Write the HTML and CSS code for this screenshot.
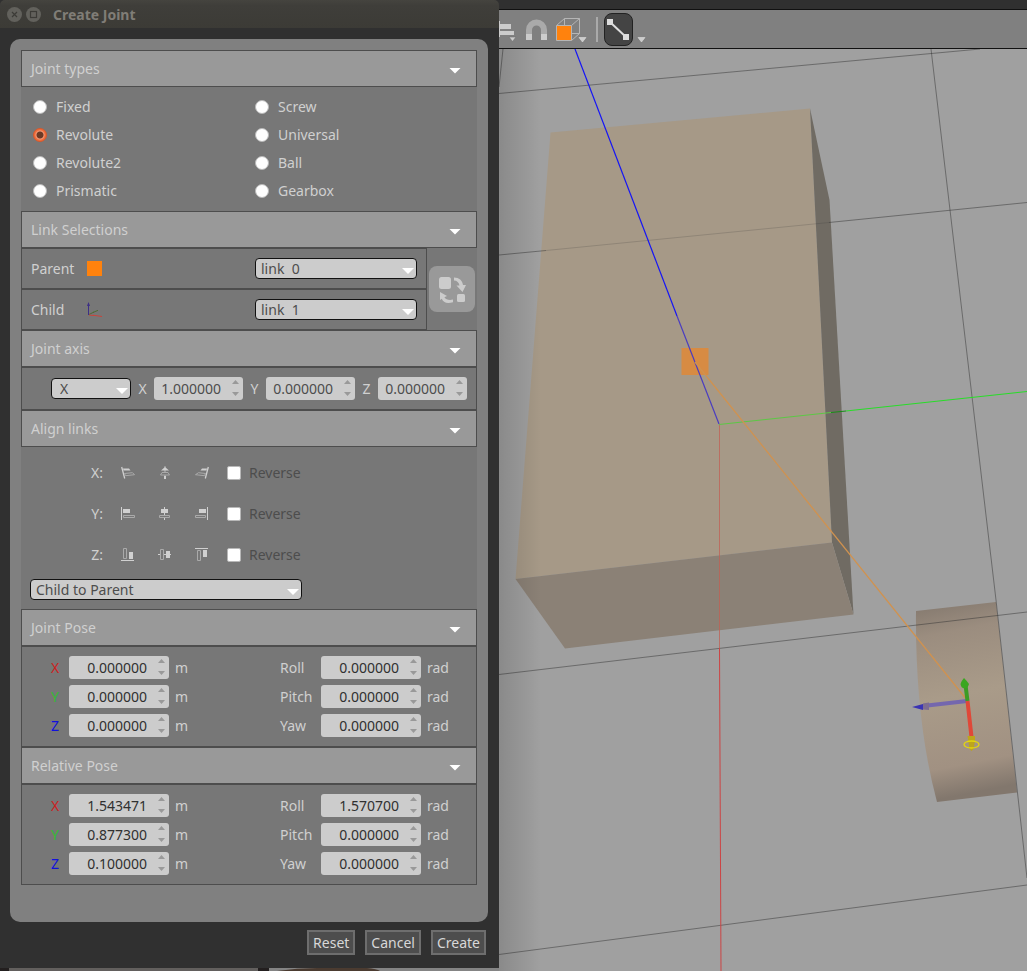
FILE: index.html
```html
<!DOCTYPE html>
<html lang="en">
  <head>
    <meta charset="UTF-8" />
    <meta name="viewport" content="width=device-width, initial-scale=1.0" />
    <title>Create Joint</title>
    <link rel="stylesheet" href="styles.css">
  </head>
  <body>
    <div class="side">
      <div class="dialog">
        <div class="titlebar">
          <button class="winButton" aria-label="Close">
            <svg width="15" height="15" viewBox="0 0 15 15"><path d="M5 5l5 5M10 5l-5 5" stroke="#3c3b37" stroke-width="1.2" /></svg>
          </button>
          <button class="winButton" aria-label="Maximize">
            <svg width="15" height="15" viewBox="0 0 15 15"><rect x="4.5" y="4.5" width="6" height="6" fill="none" stroke="#3c3b37" stroke-width="1.2" /></svg>
          </button>
          <strong class="title">Create Joint</strong>
        </div>

        <form class="panel" id="jointForm">
          <button type="button" class="header">Joint types</button>
          <div class="types">
            <label class="option"><input type="radio" name="type" class="radio" />Fixed</label>
            <label class="option"><input type="radio" name="type" class="radio" />Screw</label>
            <label class="option"><input type="radio" name="type" class="radio" checked />Revolute</label>
            <label class="option"><input type="radio" name="type" class="radio" />Universal</label>
            <label class="option"><input type="radio" name="type" class="radio" />Revolute2</label>
            <label class="option"><input type="radio" name="type" class="radio" />Ball</label>
            <label class="option"><input type="radio" name="type" class="radio" />Prismatic</label>
            <label class="option"><input type="radio" name="type" class="radio" />Gearbox</label>
          </div>

          <button type="button" class="header">Link Selections</button>
          <div class="links">
            <div class="linkRows">
              <div class="linkRow">
                <label for="parentLink" class="linkLabel">Parent</label>
                <svg class="linkIcon" width="16" height="16" viewBox="0 0 16 16"><rect x="0" y="0" width="15" height="15" fill="#ff820d" /></svg>
                <span class="combo">
                  <select class="select" id="parentLink"><option>link&nbsp; 0</option></select>
                </span>
              </div>
              <div class="linkRow">
                <label for="childLink" class="linkLabel">Child</label>
                <svg class="linkIcon" width="16" height="16" viewBox="0 0 16 16" fill="none">
                  <path d="M1.500 13V3" stroke="#3d2f86" />
                  <path d="M1.500 0L3 4H0z" fill="#3d2f86" />
                  <path d="M2 12.500l5-2.500M6 10.500l5-2.200" stroke="#4e6b33" />
                  <path d="M2 13l5 .6M6 13.200l9 1.300" stroke="#c8443a" />
                </svg>
                <span class="combo">
                  <select class="select" id="childLink"><option>link&nbsp; 1</option></select>
                </span>
              </div>
            </div>
            <div class="swapCell">
              <button type="button" class="swap" aria-label="Swap links">
                <svg width="28" height="28" viewBox="0 0 28 28" fill="#ccc">
                  <rect x="1" y="2" width="12" height="12" rx="2.500" />
                  <rect x="19" y="19" width="8" height="8" rx="1.500" />
                  <path d="M16 2.500c5 0 8.500 3 9 7.500h3l-3.500 7-6-6.500h3C21 7.500 19 5.500 16 5.500z" />
                  <path d="M2 17l7 4-2.600 1.200C8 24.500 11 25.500 15 24.500v2.700C9 29 5 27.500 3.800 23.800L2 25z" />
                </svg>
              </button>
            </div>
          </div>

          <button type="button" class="header">Joint axis</button>
          <div class="axis">
            <span class="combo axisCombo">
              <select class="select" aria-label="Axis preset"><option>X</option></select>
            </span>
            <label for="axisX" class="axisLabel">X</label>
            <span class="spin axisSpin"><input type="number" class="number" id="axisX" step="any" value="1.000000" /></span>
            <label for="axisY" class="axisLabel">Y</label>
            <span class="spin axisSpin"><input type="number" class="number" id="axisY" step="any" value="0.000000" /></span>
            <label for="axisZ" class="axisLabel">Z</label>
            <span class="spin axisSpin"><input type="number" class="number" id="axisZ" step="any" value="0.000000" /></span>
          </div>

          <button type="button" class="header">Align links</button>
          <div class="align">
            <div class="alignRow">
              <span class="alignLabel">X:</span>
              <button type="button" class="alignButton" aria-label="X min">
                <svg width="14" height="14" viewBox="0 0 14 14"><path d="M.7 1l3 11.500" stroke="#d0d0d0" stroke-width="1.300" /><path d="M2 2.500h6l1.500 2H2.500z" fill="#d0d0d0" /><path d="M3.500 7.500l8-.8 2 2-9 1z" fill="none" stroke="#aaa" /></svg>
              </button>
              <button type="button" class="alignButton" aria-label="X center">
                <svg width="14" height="14" viewBox="0 0 14 14"><path d="M7 0v13" stroke="#b8b8b8" /><path d="M7 1l4 3.500H3zM6 10h2v3H6z" fill="#d0d0d0" /><path d="M4 6.500h6l1.500 2.500h-9z" fill="#777" stroke="#aaa" /></svg>
              </button>
              <button type="button" class="alignButton" aria-label="X max">
                <svg width="14" height="14" viewBox="0 0 14 14"><path d="M13.300 1l-3 11.500" stroke="#d0d0d0" stroke-width="1.300" /><path d="M12 2.500H7l-1.500 2h6z" fill="#d0d0d0" /><path d="M10.500 7.500l-7-.8-3 2 9 1z" fill="none" stroke="#aaa" /></svg>
              </button>
              <label class="reverse"><input type="checkbox" class="check" />Reverse</label>
            </div>
            <div class="alignRow">
              <span class="alignLabel">Y:</span>
              <button type="button" class="alignButton" aria-label="Y min">
                <svg width="14" height="14" viewBox="0 0 14 14"><path d="M0 0h1v13H0zM2 2h7v4H2z" fill="#d0d0d0" /><path d="M2.500 8.500h11v2h-11z" fill="none" stroke="#aaa" /></svg>
              </button>
              <button type="button" class="alignButton" aria-label="Y center">
                <svg width="14" height="14" viewBox="0 0 14 14"><path d="M6 0h1v13H6zM3 2h7v4H3z" fill="#d0d0d0" /><path d="M1.500 8.500h10v2h-10z" fill="#777" stroke="#aaa" /></svg>
              </button>
              <button type="button" class="alignButton" aria-label="Y max">
                <svg width="14" height="14" viewBox="0 0 14 14"><path d="M12 0h1v13h-1zM4 2h7v4H4z" fill="#d0d0d0" /><path d="M.5 8.500h10v2H.5z" fill="none" stroke="#aaa" /></svg>
              </button>
              <label class="reverse"><input type="checkbox" class="check" />Reverse</label>
            </div>
            <div class="alignRow">
              <span class="alignLabel">Z:</span>
              <button type="button" class="alignButton" aria-label="Z min">
                <svg width="14" height="14" viewBox="0 0 14 14"><path d="M0 12h13v1H0zM8 4h4v7H8z" fill="#d0d0d0" /><path d="M2.500.5h3v10h-3z" fill="none" stroke="#aaa" /></svg>
              </button>
              <button type="button" class="alignButton" aria-label="Z center">
                <svg width="14" height="14" viewBox="0 0 14 14"><path d="M0 6h13v1H0zM8 3h4v7H8z" fill="#d0d0d0" /><path d="M2.500 1.500h3v10h-3z" fill="#777" stroke="#aaa" /></svg>
              </button>
              <button type="button" class="alignButton" aria-label="Z max">
                <svg width="14" height="14" viewBox="0 0 14 14"><path d="M0 0h13v1H0zM8 2h4v7H8z" fill="#d0d0d0" /><path d="M2.500 2.500h3v10h-3z" fill="none" stroke="#aaa" /></svg>
              </button>
              <label class="reverse"><input type="checkbox" class="check" />Reverse</label>
            </div>
            <span class="combo alignCombo">
              <select class="select" aria-label="Align direction"><option>Child to Parent</option></select>
            </span>
          </div>

          <button type="button" class="header">Joint Pose</button>
          <div class="pose">
            <label for="jx" class="red">X</label>
            <span class="spin"><input type="number" class="number" id="jx" step="any" value="0.000000" /></span>
            <span class="unit">m</span>
            <label for="jroll">Roll</label>
            <span class="spin"><input type="number" class="number" id="jroll" step="any" value="0.000000" /></span>
            <span class="unit">rad</span>
            <label for="jy" class="green">Y</label>
            <span class="spin"><input type="number" class="number" id="jy" step="any" value="0.000000" /></span>
            <span class="unit">m</span>
            <label for="jpitch">Pitch</label>
            <span class="spin"><input type="number" class="number" id="jpitch" step="any" value="0.000000" /></span>
            <span class="unit">rad</span>
            <label for="jz" class="blue">Z</label>
            <span class="spin"><input type="number" class="number" id="jz" step="any" value="0.000000" /></span>
            <span class="unit">m</span>
            <label for="jyaw">Yaw</label>
            <span class="spin"><input type="number" class="number" id="jyaw" step="any" value="0.000000" /></span>
            <span class="unit">rad</span>
          </div>

          <button type="button" class="header">Relative Pose</button>
          <div class="pose">
            <label for="rx" class="red">X</label>
            <span class="spin"><input type="number" class="number" id="rx" step="any" value="1.543471" /></span>
            <span class="unit">m</span>
            <label for="rroll">Roll</label>
            <span class="spin"><input type="number" class="number" id="rroll" step="any" value="1.570700" /></span>
            <span class="unit">rad</span>
            <label for="ry" class="green">Y</label>
            <span class="spin"><input type="number" class="number" id="ry" step="any" value="0.877300" /></span>
            <span class="unit">m</span>
            <label for="rpitch">Pitch</label>
            <span class="spin"><input type="number" class="number" id="rpitch" step="any" value="0.000000" /></span>
            <span class="unit">rad</span>
            <label for="rz" class="blue">Z</label>
            <span class="spin"><input type="number" class="number" id="rz" step="any" value="0.100000" /></span>
            <span class="unit">m</span>
            <label for="ryaw">Yaw</label>
            <span class="spin"><input type="number" class="number" id="ryaw" step="any" value="0.000000" /></span>
            <span class="unit">rad</span>
          </div>
        </form>

        <div class="actions">
          <button type="reset" form="jointForm" class="button">Reset</button>
          <button type="button" class="button">Cancel</button>
          <button type="submit" form="jointForm" class="button">Create</button>
        </div>
      </div>

      <!-- main window showing under the dialog -->
      <svg class="under" viewBox="0 0 499 3" preserveAspectRatio="xMinYMin slice">
        <rect width="499" height="3" fill="#231f1f" />
        <rect x="9" width="249" height="3" fill="#625f5d" />
        <rect x="269" width="230" height="3" fill="#848484" />
        <path d="M277 3q20-3 40-3h50q10 1 13 3z" fill="#4b3b30" />
      </svg>
    </div>

    <main class="view">
      <div class="menubar"></div>
      <div class="toolbar">
        <button class="tool" aria-label="Align">
          <svg width="18" height="38" viewBox="0 0 18 38"><path d="M0 11h1v16H0z" fill="#ccc" /><path d="M1 14h11v5H1zM1 21h14v4H1z" fill="#ccc" /><path d="M10 27h7l-3.500 4.500z" fill="#ccc" stroke="#707070" stroke-width=".6" /></svg>
        </button>
        <button class="tool" aria-label="Snap">
          <svg width="39" height="38" viewBox="0 0 39 38"><path d="M12 30V20a7.500 7.500 0 0 1 15 0v10" fill="none" stroke="#aaa" stroke-width="6" /><path d="M9 24h6v6H9zM24 24h6v6h-6z" fill="#ccc" /></svg>
        </button>
        <button class="tool" aria-label="View angle">
          <svg width="40" height="38" viewBox="0 0 40 38"><path d="M.5 15.500l8-7h15l-8 7M23.500 8.500v15l-8 7M8.500 8.500v7M16 23.500h7.500" fill="none" stroke="#b5b5b5" /><path d="M.5 15.500h15v15H.5z" fill="#ff820d" stroke="#b5b5b5" /><path d="M23 27.500h7L26.500 32z" fill="#ccc" stroke="#ddd" stroke-width=".6" /></svg>
        </button>
        <span class="divider"></span>
        <button class="tool jointTool" aria-label="Joint">
          <svg width="27" height="31" viewBox="1 1 27 31"><path d="M6.500 9.500L22 24" stroke="#ddd" stroke-width="2" /><path d="M3 6h6v6H3zM19 21h6v6h-6z" fill="#ddd" /></svg>
        </button>
        <button class="tool" aria-label="Joint menu">
          <svg width="16" height="38" viewBox="0 0 16 38"><path d="M5 27.500h7L8.500 32z" fill="#ccc" stroke="#ddd" stroke-width=".6" /></svg>
        </button>
      </div>

      <svg class="scene" viewBox="499 49 528 922" preserveAspectRatio="xMinYMin slice">
        <defs>
          <linearGradient id="shade" x1="0" x2="1">
            <stop offset="0" stop-color="#000" stop-opacity=".14" />
            <stop offset="1" stop-color="#000" stop-opacity="0" />
          </linearGradient>
          <linearGradient id="wheel" x1="0" y1="0" x2="0.1" y2="1">
            <stop offset="0" stop-color="#82776d" />
            <stop offset=".18" stop-color="#9b8d7f" />
            <stop offset=".5" stop-color="#a99b89" />
            <stop offset=".85" stop-color="#a19182" />
            <stop offset="1" stop-color="#82776d" />
          </linearGradient>
        </defs>
        <rect x="499" y="49" width="528" height="922" fill="#a0a0a0" />

        <!-- box -->
        <path d="M550.500 132.500L810 108.500l22 434L515.500 579z" fill="#a69987" />
        <path d="M810 108.500L829.500 200l24 414.500-21.500-72z" fill="#706b63" />
        <path d="M515.500 579L832 542.500l21.500 72L565 648.500z" fill="#8b8176" />
        <!-- wheel -->
        <path d="M916 611l80-9 21 190.500-80 9.500Q915 720 916 611z" fill="url(#wheel)" />

        <!-- ground grid -->
        <g fill="none" stroke="#333" stroke-opacity=".55" stroke-width=".9">
          <path d="M503 49l-4 38M499 93.500L980 49M499 674.500L1027 612M499 954.500L1027 885" />
          <path d="M931 49l19 161 46 390 31 278" />
          <path d="M499 255l47-4.500M829 222.500l198-20" />
          <path d="M546 250.500l283-28" stroke-opacity=".22" />
        </g>
        <rect x="499" y="49" width="42" height="922" fill="url(#shade)" />

        <!-- world axes -->
        <g fill="none">
          <path d="M719.500 424V648" stroke="#c06054" stroke-opacity=".75" />
          <path d="M719.500 648L721 971" stroke="#c44" />
          <path d="M719 424.500l112-12" stroke="#5cc845" />
          <path d="M831 412.500l15-1.500" stroke="#178c17" />
          <path d="M846 411l181-19.500" stroke="#28dd28" />
          <path d="M575 49l102 267" stroke="#1515f5" stroke-width="1.200" />
        </g>

        <rect x="681.500" y="348" width="27" height="27" fill="#d78b43" />
        <path d="M677 316l42 108" stroke="#4a3dc0" stroke-width="1.200" />
        <path d="M695 362L967 700" stroke="#d0924f" stroke-width="1.300" />

        <!-- joint frame -->
        <path d="M967 701l-44 5" stroke="#7467ae" stroke-width="4" />
        <path d="M929 702.500v7.500l-6-.5v-6z" fill="#7d6c91" />
        <path d="M912 707l11-3v6z" fill="#3a34b4" />
        <path d="M967.500 701l-2-16" stroke="#3c9c25" stroke-width="4" />
        <path d="M964 678q3 3 5 6-1 4-4.500 4.500Q961 688 960.500 684q1.500-4 3.500-6z" fill="#3aa620" />
        <path d="M967.500 701l4 36" stroke="#e04838" stroke-width="4" />
        <path d="M967.500 736h7.500v5l-1.500 8-2 2-2-2z" fill="#bda51c" />
        <ellipse cx="971.500" cy="744.500" rx="7.500" ry="3.500" fill="none" stroke="#e3d60f" stroke-width="1.300" />
      </svg>
    </main>
  </body>
</html>
```

FILE: styles.css
```css
* {
  box-sizing: border-box;
}
body {
  display: flex;
  min-height: 100vh;
  margin: 0;
  background-color: #a0a0a0;
  color: #d0d0d0;
  font-family: "Noto Sans", "Open Sans", sans-serif;
  font-size: 14px;
  line-height: 20px;
}
button,
input,
select {
  font: inherit;
  color: inherit;
  margin: 0;
}
button {
  padding: 0;
  border: none;
  background: none;
  cursor: pointer;
}
svg {
  display: block;
}

/* dialog */
.side {
  flex: none;
  display: flex;
  flex-direction: column;
  width: 499px;
}
.dialog {
  background-color: #303030;
}
.under {
  width: 100%;
  flex: 1 0 0;
  min-height: 3px;
}
.titlebar {
  display: flex;
  align-items: center;
  gap: 4px;
  height: 28px;
  padding: 1px 0 0 7px;
  border-radius: 5px 5px 0 0;
  background: linear-gradient(#45443f, #3f3e3a 20%, #3c3b36);
}
.winButton {
  border-radius: 50%;
  background-color: #62615c;
}
.title {
  margin-left: 8px;
  color: #807d77;
}
.panel {
  margin: 11px 11px 0 10px;
  padding: 11px 11px 37px;
  border-radius: 10px;
  background-color: #808080;
}

/* section header */
.header {
  display: flex;
  justify-content: space-between;
  align-items: center;
  width: 100%;
  height: 37px;
  padding: 0 15px 0 9px;
  border: 1px solid #4d4d4d;
  background-color: #999;
}
.header::after {
  content: "";
  width: 12px;
  height: 6px;
  margin-top: 4px;
  background-color: #fff;
  clip-path: polygon(0 0, 100% 0, 50% 100%);
}

/* joint types */
.types {
  display: grid;
  grid-template-columns: 222px 1fr;
  padding: 6px 12px;
  background-color: #777;
}
.option {
  display: flex;
  align-items: center;
  gap: 9px;
  height: 28px;
}
.radio {
  appearance: none;
  width: 14px;
  height: 14px;
  border: 1px solid #b8b8b8;
  border-radius: 50%;
  background-color: #fff;
}
.radio:checked {
  border-color: #d9582b;
  background: radial-gradient(#6b3a26 3px, #f79a78 4px, #f0703f 5px, #e8602f);
}

/* drop-down */
.combo {
  position: relative;
  display: block;
}
.combo::after {
  content: "";
  position: absolute;
  right: 3px;
  bottom: 5px;
  width: 12px;
  height: 6px;
  background-color: #fff;
  clip-path: polygon(0 0, 100% 0, 50% 100%);
  pointer-events: none;
}
.select {
  display: block;
  appearance: none;
  width: 100%;
  height: 21px;
  padding: 0 20px 0 5px;
  border: 1px solid #111;
  border-radius: 4px;
  background-color: #ccc;
  color: #4d4d4d;
  line-height: 19px;
}

/* spin box */
.spin {
  position: relative;
  display: block;
}
.spin::before,
.spin::after {
  content: "";
  position: absolute;
  right: 4px;
  width: 7px;
  height: 4px;
  background-color: #999;
  pointer-events: none;
}
.spin::before {
  top: 3px;
  clip-path: polygon(50% 0, 100% 100%, 0 100%);
}
.spin::after {
  bottom: 4px;
  clip-path: polygon(0 0, 100% 0, 50% 100%);
}
.number {
  display: block;
  appearance: textfield;
  width: 100%;
  height: 23px;
  padding: 0 22px 0 0;
  border: none;
  border-radius: 3px;
  background-color: #ccc;
  color: #303030;
  text-align: right;
}
.number::-webkit-inner-spin-button {
  appearance: none;
  margin: 0;
}

/* link selections */
.links {
  display: flex;
  background-color: #777;
}
.linkRows {
  flex: 1;
}
.linkRow {
  display: flex;
  align-items: center;
  height: 41px;
  padding: 0 9px;
  border: 1px solid #4d4d4d;
}
.linkLabel {
  width: 56px;
}
.linkRow .combo {
  width: 162px;
  margin-left: auto;
}
.swapCell {
  display: flex;
  align-items: center;
  justify-content: center;
  width: 50px;
}
.swap {
  display: flex;
  align-items: center;
  justify-content: center;
  width: 46px;
  height: 46px;
  border-radius: 8px;
  background-color: #999;
}

/* joint axis */
.axis {
  display: flex;
  align-items: center;
  justify-content: flex-end;
  height: 43px;
  padding-right: 9px;
  border: 1px solid #4d4d4d;
  background-color: #777;
}
.axisCombo {
  width: 80px;
}
.axisCombo .select {
  padding-left: 8px;
}
.axisLabel {
  width: 23px;
  text-align: center;
}
.axisSpin {
  width: 89px;
}
.axisSpin .number {
  color: #4d4d4d;
}

/* align links */
.align {
  padding: 5px 9px 9px;
  background-color: #777;
}
.alignRow {
  display: flex;
  align-items: center;
  height: 41px;
}
.alignLabel {
  width: 73px;
  margin-right: 6px;
  text-align: right;
}
.alignButton {
  display: flex;
  align-items: center;
  justify-content: center;
  width: 37px;
  height: 33px;
}
.reverse {
  display: flex;
  align-items: center;
  gap: 8px;
  margin-left: 7px;
  color: #4d4d4d;
}
.check {
  appearance: none;
  width: 14px;
  height: 14px;
  border: 1px solid #b8b8b8;
  border-radius: 2px;
  background-color: #fff;
}
.alignCombo {
  width: 272px;
  margin-top: 4px;
}

/* poses */
.pose {
  display: grid;
  grid-template-columns: 18px 100px 111px 41px 100px 1fr;
  row-gap: 6px;
  align-items: center;
  padding: 9px 9px 9px 29px;
  border: 1px solid #4d4d4d;
  background-color: #777;
}
.pose label,
.unit {
  height: 23px;
  line-height: 23px;
}
.unit {
  padding-left: 6px;
}
.red {
  color: #c22;
}
.green {
  color: #3b3;
}
.blue {
  color: #11d;
}

/* dialog buttons */
.actions {
  display: flex;
  justify-content: flex-end;
  gap: 10px;
  padding: 8px 13px 13px;
}
.button {
  height: 25px;
  padding: 0 4px;
  border: 2px solid #6e6e6e;
  background-color: #4d4d4d;
  color: #d8d8d8;
}

/* 3d view */
.view {
  flex: 1;
  display: flex;
  flex-direction: column;
  min-width: 0;
}
.menubar {
  height: 10px;
  border-bottom: 1px solid #111;
  background-color: #303030;
}
.toolbar {
  display: flex;
  align-items: center;
  height: 39px;
  border-bottom: 1px solid #111;
  background-color: #808080;
}
.tool {
  flex: none;
}
.tool svg {
  overflow: visible;
}
.divider {
  width: 2px;
  height: 25px;
  margin-right: 6px;
  background-color: #aaa;
}
.jointTool {
  border: 1px solid #222;
  border-radius: 8px;
  background-color: #444;
}
.scene {
  flex: 1 0 0;
  width: 100%;
  min-height: 0;
}
```
